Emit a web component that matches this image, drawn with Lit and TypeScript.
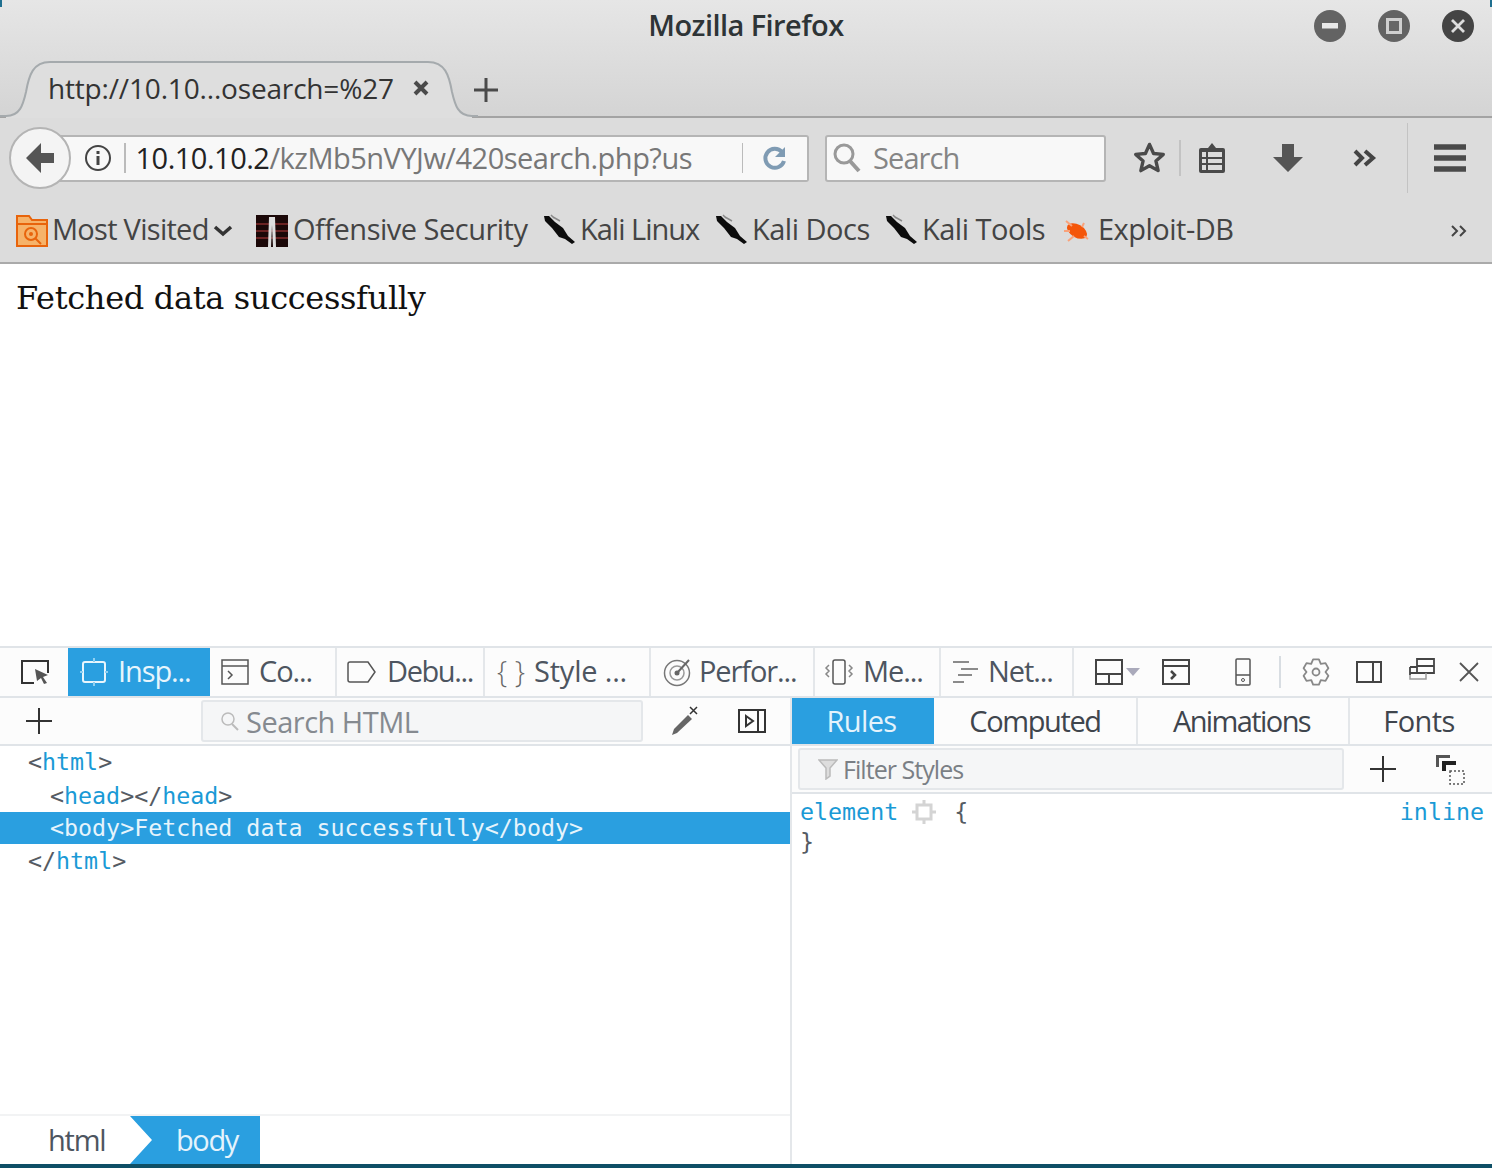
import { LitElement, html, css, svg } from "lit";
import { customElement } from "lit/decorators.js";

const kali = svg`<svg width="34" height="34" viewBox="0 0 34 34"><path d="M1 2h5l6 6 8 6 5 8 7 6-3 2-7-5-6-2-7-9-7-7z" fill="#0c0c0c"/><path d="M10 3l7 4M8 1l3 3" stroke="#8a8a8a" stroke-width="1.500"/></svg>`;

function gearPath(): string {
  const pts: string[] = [];
  for (let i = 0; i < 6; i++) {
    const a = i * 60 - 90;
    const at = (deg: number, r: number) => {
      const t = (deg * Math.PI) / 180;
      return `${(14 + r * Math.cos(t)).toFixed(1)} ${(14 + r * Math.sin(t)).toFixed(1)}`;
    };
    pts.push(at(a - 13, 13), at(a + 13, 13), at(a + 30, 9.5));
  }
  return "M" + pts.join("L") + "z";
}

@customElement("app-root")
export class AppRoot extends LitElement {
  static styles = css`
    :host { display: flex; flex-direction: column; width: 1492px; height: 1168px; overflow: hidden; background: #fff; position: relative;
      font-family: "Open Sans", "Noto Sans", sans-serif; color: #3c3c3c; }
    svg { display: block; flex: none; }
    .corner { position: absolute; top: 0; width: 2px; height: 7px; background: #1f6f8f; }
    .corner.l { left: 0; }
    .corner.r { right: 0; }
    .chrome-top { height: 118px; flex: none; display: flex; flex-direction: column; background: linear-gradient(#e6e6e6, #d4d4d4 100%); border-bottom: 2px solid #a3a3a3; box-sizing: border-box; }
    .titlebar { height: 52px; flex: none; display: flex; align-items: center; justify-content: flex-end; position: relative; padding-right: 18px; gap: 32px; }
    .title { position: absolute; left: 0; right: 0; top: 8px; text-align: center; font-size: 29px; line-height: 34px; font-weight: 600; color: #2e3436; letter-spacing: -0.57px; }
    .wbtn { width: 32px; height: 32px; border-radius: 50%; background: #636363; display: flex; align-items: center; justify-content: center; position: relative; }
    .wbtn.close { background: #444; }
    .tabs { flex: 1; display: flex; align-items: flex-end; position: relative; }
    .tab { width: 460px; height: 60px; position: relative; flex: none; display: flex; align-items: center; padding: 3px 0 0 48px; box-sizing: border-box; font-size: 28px; letter-spacing: -0.17px; color: #333; gap: 19px; }
    .tab svg.shape { position: absolute; left: 0; top: 0; overflow: visible; }
    .tab span, .tab .x { position: relative; }
    .plus { margin: 0 0 14px 14px; }
    .nav { height: 82px; flex: none; background: #dcdcdc; display: flex; align-items: center; position: relative; padding-bottom: 2px; box-sizing: border-box; }
    .back { width: 62px; height: 62px; border-radius: 50%; background: #f4f4f4; border: 2px solid #b4b4b4; position: absolute; left: 9px; top: 9px; box-sizing: border-box; display: flex; align-items: center; justify-content: center; }
    .url { margin-left: 40px; width: 769px; height: 47px; background: #f8f8f8; border: 2px solid #b5b5b5; border-left: none; box-sizing: border-box; border-radius: 0 3px 3px 0; display: flex; align-items: center; padding-left: 44px; font-size: 29px; letter-spacing: -0.5px; color: #777; white-space: nowrap; }
    .url b { font-weight: 400; color: #222; }
    .url .sep { width: 1.5px; height: 30px; background: #bbb; flex: none; }
    .url .path { margin-left: 10px; width: 606px; flex: none; padding-bottom: 2px; }
    .info { margin-right: 12px; }
    .reload { margin-left: 19px; }
    .search { margin-left: 16px; width: 281px; height: 47px; background: #f8f8f8; border: 2px solid #b5b5b5; box-sizing: border-box; border-radius: 3px; display: flex; align-items: center; padding-left: 5px; gap: 11px; font-size: 29px; color: #858585; letter-spacing: -0.9px; }
    .search span { padding-bottom: 2px; }
    .tools { display: flex; align-items: center; flex: 1; height: 100%; position: relative; }
    .vsep { width: 1.5px; background: #c3c3c3; flex: none; }
    .v36 { height: 36px; margin-left: 13px; }
    .v70 { height: 70px; margin-left: 30px; }
    .v32 { height: 32px; margin-left: 28px; background: #d8dde2; }
    .t-star { margin-left: 27px; }
    .t-clip { margin-left: 16px; }
    .t-down { margin-left: 46px; }
    .t-more { margin-left: 50px; }
    .t-menu { margin-left: 26px; }
    .bookmarks { height: 62px; flex: none; background: #dcdcdc; border-bottom: 2px solid #aaaaaa; box-sizing: content-box; display: flex; align-items: center; padding-left: 16px; font-size: 29px; letter-spacing: -0.5px; color: #444; white-space: nowrap; position: relative; }
    .bm { display: flex; align-items: center; gap: 3px; flex: none; }
    .bm span { padding-bottom: 5px; }
    .b1 { width: 240px; gap: 4px; letter-spacing: -0.72px; }
    .b2 { width: 287px; gap: 5px; }
    .b3 { width: 172px; letter-spacing: -1px; }
    .b4 { width: 170px; }
    .b5 { width: 177px; }
    .b6 { gap: 4px; }
    .chev { margin-left: 0; }
    .bm-more { margin-left: auto; margin-right: 25px; }
    .page { height: 382px; flex: none; padding: 15px 0 0 16px; box-sizing: border-box; font-family: "DejaVu Serif", serif; font-size: 32px; color: #111; letter-spacing: -0.33px; }
    .devtools { flex: 1; display: flex; flex-direction: column; min-height: 0; }
    .dtabs { height: 52px; flex: none; display: flex; background: #fcfcfc; border-top: 2px solid #e0e4e8; border-bottom: 2px solid #e0e4e8; box-sizing: border-box; font-size: 29px; letter-spacing: -1.1px; color: #4d5560; }
    .dt { display: flex; align-items: center; padding-left: 10px; gap: 10px; box-sizing: border-box; border-right: 2px solid #e4e7ea; white-space: nowrap; flex: none; overflow: hidden; }
    .dt span { padding-bottom: 3px; }
    .dt.on { background: #2a9fe0; color: #e8f5fc; border-right: none; }
    .d-pick { width: 68px; padding-left: 20px; border-right: none; }
    .d-insp { width: 142px; padding-left: 12px; }
    .d-con { width: 127px; padding-left: 11px; }
    .d-dbg { width: 148px; }
    .d-dbg span { letter-spacing: -1.4px; }
    .d-sty { width: 166px; padding-left: 12px; gap: 9px; }
    .d-sty span { letter-spacing: -0.2px; }
    .d-sty span.brace { color: #666; font-weight: 300; letter-spacing: 0; }
    .d-perf { width: 164px; padding-left: 11px; gap: 7px; }
    .d-mem { width: 126px; padding-left: 9px; gap: 9px; }
    .d-net { width: 133px; padding-left: 11px; }
    .dicons { flex: 1; display: flex; align-items: center; position: relative; }
    .di-layout { margin-left: 21px; }
    .di-arrow { margin-left: 3px; }
    .di-con { margin-left: 22px; }
    .di-phone { margin-left: 45px; }
    .di-gear { margin-left: 21px; }
    .di-panel { margin-left: 26px; }
    .di-win { margin: 0 0 6px 27px; }
    .di-x { margin-left: 24px; }
    .split { flex: 1; display: flex; min-height: 0; }
    .left { width: 792px; flex: none; display: flex; flex-direction: column; border-right: 2px solid #e4e7ea; box-sizing: border-box; }
    .right { flex: 1; display: flex; flex-direction: column; min-width: 0; }
    .lbar { height: 48px; flex: none; display: flex; align-items: center; background: #fcfcfc; border-bottom: 2px solid #e0e4e8; box-sizing: border-box; position: relative; padding-left: 26px; }
    .sbox { height: 42px; margin-left: 149px; width: 442px; box-sizing: border-box; background: #f5f6f7; border: 2px solid #e4e7ea; border-radius: 3px; display: flex; align-items: center; padding-left: 17px; gap: 6px; font-size: 29px; letter-spacing: -0.5px; color: #858a90; flex: none; }
    .l-pen { margin-left: 27px; }
    .l-side { margin-left: 40px; }
    .tree { flex: 1; font-family: "DejaVu Sans Mono", monospace; font-size: 23.3px; color: #555b63; white-space: nowrap; }
    .tree .ln { height: 33px; line-height: 33px; padding-left: 28px; }
    .tree .ln.first { line-height: 31px; }
    .tree .ln.last { height: 34px; }
    .tree .i { padding-left: 50px; }
    .tree .sel { background: #2a9fe0; color: #e6f4fc; height: 32px; line-height: 32px; }
    .tree em { font-style: normal; color: #1a9ad6; }
    .crumbs { height: 50px; flex: none; border-top: 2px solid #f2f3f4; display: flex; box-sizing: border-box; font-size: 29px; letter-spacing: -1.2px; color: #4d5560; }
    .crumbs div { width: 130px; box-sizing: border-box; display: flex; align-items: center; padding-bottom: 2px; }
    .crumbs .c1 { padding-left: 48px; }
    .crumbs .c2 { padding-left: 46px; background: #2a9fe0; color: #e4f3fc; letter-spacing: -1.4px; clip-path: polygon(0 0, 100% 0, 100% 100%, 0 100%, 22px 50%); }
    .rtabs { height: 48px; flex: none; display: flex; background: #fcfcfc; border-bottom: 2px solid #e0e4e8; box-sizing: border-box; font-size: 29px; letter-spacing: -0.6px; color: #3f454d; }
    .rt { display: flex; align-items: center; justify-content: center; border-right: 2px solid #e4e7ea; box-sizing: border-box; flex: none; padding-bottom: 2px; }
    .rt.on { background: #2a9fe0; color: #e4f3fc; border-right: none; width: 142px; padding-right: 3px; }
    .r-comp { width: 204px; letter-spacing: -1.4px; }
    .r-anim { width: 212px; letter-spacing: -1.6px; padding-right: 3px; }
    .r-font { flex: 1; border: none; padding-right: 4px; }
    .rbar { height: 48px; flex: none; display: flex; align-items: center; background: #fcfcfc; border-bottom: 2px solid #e0e4e8; box-sizing: border-box; }
    .fbox { margin-left: 6px; width: 546px; height: 42px; box-sizing: border-box; background: #f5f6f7; border: 2px solid #e4e7ea; border-radius: 3px; display: flex; align-items: center; padding-left: 18px; gap: 5px; font-size: 25px; letter-spacing: -0.95px; color: #7a7f85; flex: none; }
    .r-plus { margin-left: 26px; }
    .r-over { margin-left: 38px; }
    .rules { flex: 1; position: relative; font-family: "DejaVu Sans Mono", monospace; font-size: 23.3px; color: #555b63; padding: 3px 8px; }
    .rules .ln { height: 30px; line-height: 30px; display: flex; align-items: center; }
    .rules em { font-style: normal; color: #1a9ad6; }
    .rules .sp { flex: 1; }
    .el-ico { margin: 0 18px 0 14px; }
    .bottom { height: 4px; flex: none; background: #0e4f66; }
  `;

  render() {
    return html`
      <div class="corner l"></div><div class="corner r"></div>
      <div class="chrome-top">
        <div class="titlebar">
          <div class="title">Mozilla Firefox</div>
          <div class="wbtn"><svg width="16" height="6"><rect width="16" height="5.500" fill="#e8e8e8"/></svg></div>
          <div class="wbtn"><svg width="16" height="16"><rect width="16" height="16" fill="#cfcfcf"/><rect x="3" y="3" width="10" height="10" fill="#666"/></svg></div>
          <div class="wbtn close"><svg width="16" height="16"><path d="M2 2l12 12M14 2L2 14" stroke="#ddd" stroke-width="2.800"/></svg></div>
        </div>
        <div class="tabs">
          <div class="tab">
            <svg class="shape" width="480" height="62" viewBox="0 0 480 62"><path d="M6 60C20 60 23 49 26 36 29 19 33 6 50 6H428C445 6 449 19 452 36 455 49 458 60 472 60V62H6z" fill="#dedede"/><path d="M0 60H6C20 60 23 49 26 36 29 19 33 6 50 6H428C445 6 449 19 452 36 455 49 458 60 472 60H478" fill="none" stroke="#a5aaad" stroke-width="2"/></svg>
            <span>http://10.10...osearch=%27</span>
            <svg class="x" width="16" height="16"><path d="M2 2l12 12M14 2L2 14" stroke="#4a4a4a" stroke-width="4"/></svg>
          </div>
          <svg class="plus" width="24" height="24"><path d="M12 0v24M0 12h24" stroke="#4a4a4a" stroke-width="3"/></svg>
        </div>
      </div>
      <div class="nav">
        <div class="back"><svg width="30" height="32" viewBox="0 0 30 32"><path d="M16 1L1 16l15 15V21h13V11H16z" fill="#555"/></svg></div>
        <div class="url">
          <svg class="info" width="28" height="28" viewBox="0 0 28 28"><circle cx="14" cy="14" r="12" fill="none" stroke="#444" stroke-width="2"/><rect x="12.500" y="12" width="3" height="9" fill="#444"/><rect x="12.500" y="7" width="3" height="3" fill="#444"/></svg>
          <div class="sep"></div>
          <div class="path"><b>10.10.10.2</b>/kzMb5nVYJw/420search.php?us</div>
          <div class="sep"></div>
          <svg class="reload" width="26" height="26" viewBox="0 0 26 26"><path d="M20 7a9.500 9.500 0 1 0 2 9" fill="none" stroke="#7f9bb3" stroke-width="4"/><path d="M23 2v10H13z" fill="#7f9bb3"/></svg>
        </div>
        <div class="search">
          <svg width="30" height="32" viewBox="0 0 30 32"><circle cx="12" cy="12" r="9" fill="none" stroke="#999" stroke-width="3"/><path d="M18 19l9 10" stroke="#999" stroke-width="4"/></svg>
          <span>Search</span>
        </div>
        <div class="tools">
          <svg class="t-star" width="33" height="34" viewBox="0 0 34 34"><path d="M17 3l4.200 9.300 10 1-7.600 6.700 2.300 10L17 25l-8.900 5 2.300-10-7.600-6.700 10-1z" fill="none" stroke="#4a4a4a" stroke-width="3.500" stroke-linejoin="round"/></svg>
          <div class="vsep v36"></div>
          <svg class="t-clip" width="30" height="34" viewBox="0 0 30 34"><path d="M4 7h7l4-5 4 5h7a2 2 0 0 1 2 2v21a2 2 0 0 1-2 2H4a2 2 0 0 1-2-2V9a2 2 0 0 1 2-2z" fill="#4a4a4a"/><path d="M5 11h4v5H5zM11 11h14v5H11zM5 18h4v4H5zM11 18h14v4H11zM5 24h4v5H5zM11 24h14v5H11z" fill="#dcdcdc"/></svg>
          <svg class="t-down" width="30" height="30" viewBox="0 0 30 30"><path d="M9 1h12v13h9L15 29 0 14h9z" fill="#555"/></svg>
          <svg class="t-more" width="24" height="18" viewBox="0 0 24 18"><path d="M2 2l7 7-7 7M12 2l8 7-8 7" fill="none" stroke="#444" stroke-width="4"/></svg>
          <div class="vsep v70"></div>
          <svg class="t-menu" width="32" height="28" viewBox="0 0 32 28"><path d="M0 3h32M0 14h32M0 25h32" stroke="#4a4a4a" stroke-width="5.500"/></svg>
        </div>
      </div>
      <div class="bookmarks">
        <div class="bm b1">
          <svg width="32" height="32" viewBox="0 0 32 32"><path d="M1 1h12l3 4h15v26H1z" fill="#f6b36a" stroke="#e8640c" stroke-width="2"/><path d="M1 9h30" stroke="#e8640c" stroke-width="2"/><circle cx="15" cy="19" r="6" fill="none" stroke="#e8640c" stroke-width="2"/><circle cx="15" cy="19" r="2" fill="#e8640c"/><path d="M19 23l6 6" stroke="#e8640c" stroke-width="2"/></svg>
          <span>Most Visited</span>
          <svg class="chev" width="20" height="12" viewBox="0 0 20 12"><path d="M2 2l8 7 8-7" fill="none" stroke="#333" stroke-width="3.500"/></svg>
        </div>
        <div class="bm b2">
          <svg width="32" height="32" viewBox="0 0 32 32"><rect width="32" height="32" fill="#1b0808"/><path d="M0 9h32M0 16h32M0 23h32" stroke="#6a2222" stroke-width="2"/><path d="M13 2h6l1 30h-3l-1-22-1 22h-3z" fill="#ddd"/></svg>
          <span>Offensive Security</span>
        </div>
        <div class="bm b3">${kali}<span>Kali Linux</span></div>
        <div class="bm b4">${kali}<span>Kali Docs</span></div>
        <div class="bm b5">${kali}<span>Kali Tools</span></div>
        <div class="bm b6">
          <svg width="32" height="32" viewBox="0 0 32 32"><ellipse cx="15" cy="16" rx="11" ry="6.500" transform="rotate(30 15 16)" fill="#f4560a"/><path d="M4 6l6 5M2 16h6M6 26l6-5M22 8l-2 4M26 24l-4-3" stroke="#f9a27a" stroke-width="2"/></svg>
          <span>Exploit-DB</span>
        </div>
        <svg class="bm-more" width="16" height="14" viewBox="0 0 16 14"><path d="M1 2l5 5-5 5M9 2l5 5-5 5" fill="none" stroke="#444" stroke-width="2"/></svg>
      </div>
      <div class="page">Fetched data successfully</div>
      <div class="devtools">
        <div class="dtabs">
          <div class="dt d-pick"><svg width="30" height="26" viewBox="0 0 30 26"><path d="M14 24H2V2h26v12" fill="none" stroke="#333" stroke-width="2"/><path d="M15 10l13 6-5 2 4 6-3 1-3-6-4 3z" fill="#555"/></svg></div>
          <div class="dt on d-insp"><svg width="28" height="28" viewBox="0 0 28 28"><rect x="3" y="4" width="22" height="20" rx="2" fill="none" stroke="#e8f5fc" stroke-width="2"/><path d="M14 0v4M14 24v4M0 14h3M25 14h3" stroke="#8fd0f2" stroke-width="2"/></svg><span>Insp...</span></div>
          <div class="dt d-con"><svg width="28" height="26" viewBox="0 0 28 26"><path d="M1 1h26v24H1zM1 7h26" fill="none" stroke="#555" stroke-width="1.500"/><path d="M7 12l4 4-4 4" fill="none" stroke="#555" stroke-width="1.500"/></svg><span>Co...</span></div>
          <div class="dt d-dbg"><svg width="30" height="24" viewBox="0 0 30 24"><path d="M3 2h18l7 10-7 10H3a2 2 0 0 1-2-2V4a2 2 0 0 1 2-2z" fill="none" stroke="#555" stroke-width="1.500"/></svg><span>Debu...</span></div>
          <div class="dt d-sty"><span class="brace">{ }</span><span>Style ...</span></div>
          <div class="dt d-perf"><svg width="30" height="30" viewBox="0 0 30 30"><circle cx="15" cy="16" r="12.500" fill="none" stroke="#777" stroke-width="1.500"/><circle cx="15" cy="16" r="7" fill="none" stroke="#999" stroke-width="1.500"/><circle cx="15" cy="16" r="2.500" fill="#666"/><path d="M15 16L27 3" stroke="#666" stroke-width="2"/></svg><span>Perfor...</span></div>
          <div class="dt d-mem"><svg width="30" height="26" viewBox="0 0 30 26"><rect x="9" y="1" width="12" height="24" rx="2" fill="none" stroke="#555" stroke-width="1.500"/><path d="M5 6l-3 3 3 3-3 3 3 3M25 6l3 3-3 3 3 3-3 3" fill="none" stroke="#888" stroke-width="1.500"/></svg><span>Me...</span></div>
          <div class="dt d-net"><svg width="26" height="24" viewBox="0 0 26 24"><path d="M1 2h16M9 9h17M6 15h14M1 22h11" stroke="#666" stroke-width="1.500"/></svg><span>Net...</span></div>
          <div class="dicons">
            <svg class="di-layout" width="28" height="26" viewBox="0 0 28 26"><path d="M1 1h26v24H1zM1 15h26M14 15v10" fill="none" stroke="#444" stroke-width="2"/></svg>
            <svg class="di-arrow" width="14" height="8" viewBox="0 0 14 8"><path d="M0 0h14L7 8z" fill="#aab"/></svg>
            <svg class="di-con" width="28" height="26" viewBox="0 0 28 26"><path d="M1 1h26v24H1zM1 7h26" fill="none" stroke="#444" stroke-width="2"/><path d="M9 12l4 4-4 4" fill="none" stroke="#444" stroke-width="2.500"/></svg>
            <svg class="di-phone" width="16" height="28" viewBox="0 0 16 28"><rect x="1" y="1" width="14" height="26" rx="1" fill="none" stroke="#555" stroke-width="1.500"/><path d="M1 17h14" stroke="#555" stroke-width="1.500"/><circle cx="8" cy="22" r="1.500" fill="none" stroke="#555"/></svg>
            <div class="vsep v32"></div>
            <svg class="di-gear" width="28" height="28" viewBox="0 0 28 28"><path d="${gearPath()}" fill="none" stroke="#888" stroke-width="1.800" stroke-linejoin="round"/><circle cx="14" cy="14" r="3.500" fill="none" stroke="#888" stroke-width="1.800"/></svg>
            <svg class="di-panel" width="26" height="22" viewBox="0 0 26 22"><path d="M1 1h24v20H1zM17 1v20" fill="none" stroke="#444" stroke-width="2"/></svg>
            <svg class="di-win" width="26" height="22" viewBox="0 0 26 22"><path d="M8 1h17v14H8zM8 8h17M1 9h7M1 9v8M1 15h7" fill="none" stroke="#444" stroke-width="1.800"/><path d="M1 17v4h16v-6" fill="none" stroke="#999" stroke-width="1.500"/></svg>
            <svg class="di-x" width="20" height="20" viewBox="0 0 20 20"><path d="M1 1l18 18M19 1L1 19" stroke="#555" stroke-width="1.800"/></svg>
          </div>
        </div>
        <div class="split">
          <div class="left">
            <div class="lbar">
              <svg width="26" height="26" viewBox="0 0 26 26"><path d="M13 0v26M0 13h26" stroke="#333" stroke-width="2"/></svg>
              <div class="sbox">
                <svg width="20" height="20" viewBox="0 0 20 20"><circle cx="8" cy="8" r="6" fill="none" stroke="#bbb" stroke-width="1.500"/><path d="M12 13l6 6" stroke="#bbb" stroke-width="2"/></svg>
                <span>Search HTML</span>
              </div>
              <svg class="l-pen" width="28" height="30" viewBox="0 0 28 30"><path d="M18 9l4 4L7 27l-5 2 2-6z" fill="#666"/><path d="M20 8l7-7M20 1l7 7" stroke="#333" stroke-width="1.500"/></svg>
              <svg class="l-side" width="28" height="24" viewBox="0 0 28 24"><path d="M1 1h26v22H1zM20 1v22" fill="none" stroke="#333" stroke-width="2"/><path d="M8 7l7 5-7 5z" fill="none" stroke="#333" stroke-width="2"/></svg>
            </div>
            <div class="tree">
              <div class="ln first">&lt;<em>html</em>&gt;</div>
              <div class="ln i">&lt;<em>head</em>&gt;&lt;/<em>head</em>&gt;</div>
              <div class="ln i sel">&lt;body&gt;Fetched data successfully&lt;/body&gt;</div>
              <div class="ln last">&lt;/<em>html</em>&gt;</div>
            </div>
            <div class="crumbs"><div class="c1">html</div><div class="c2">body</div></div>
          </div>
          <div class="right">
            <div class="rtabs">
              <div class="rt on">Rules</div>
              <div class="rt r-comp">Computed</div>
              <div class="rt r-anim">Animations</div>
              <div class="rt r-font">Fonts</div>
            </div>
            <div class="rbar">
              <div class="fbox">
                <svg width="20" height="22" viewBox="0 0 20 22"><path d="M1 2h18l-7 8v8l-4 3V10z" fill="#ddd" stroke="#bbb" stroke-width="1.500"/></svg>
                <span>Filter Styles</span>
              </div>
              <svg class="r-plus" width="26" height="26" viewBox="0 0 26 26"><path d="M13 0v26M0 13h26" stroke="#333" stroke-width="2"/></svg>
              <svg class="r-over" width="34" height="32" viewBox="0 0 34 32"><path d="M2 14V2h14v3H5v9z" fill="#555"/><path d="M8 18V8h14v4H12v6z" fill="#222"/><path d="M16 18h14v13H16z" fill="none" stroke="#555" stroke-width="1.500" stroke-dasharray="2 2"/></svg>
            </div>
            <div class="rules">
              <div class="ln"><em>element</em><svg class="el-ico" width="24" height="24" viewBox="0 0 24 24"><rect x="5" y="5" width="14" height="14" fill="none" stroke="#d4d4d4" stroke-width="3"/><path d="M12 0v5M12 19v5M0 12h5M19 12h5" stroke="#d4d4d4" stroke-width="3"/></svg>{<span class="sp"></span><em>inline</em></div>
              <div class="ln">}</div>
            </div>
          </div>
        </div>
        <div class="bottom"></div>
      </div>
    `;
  }
}
